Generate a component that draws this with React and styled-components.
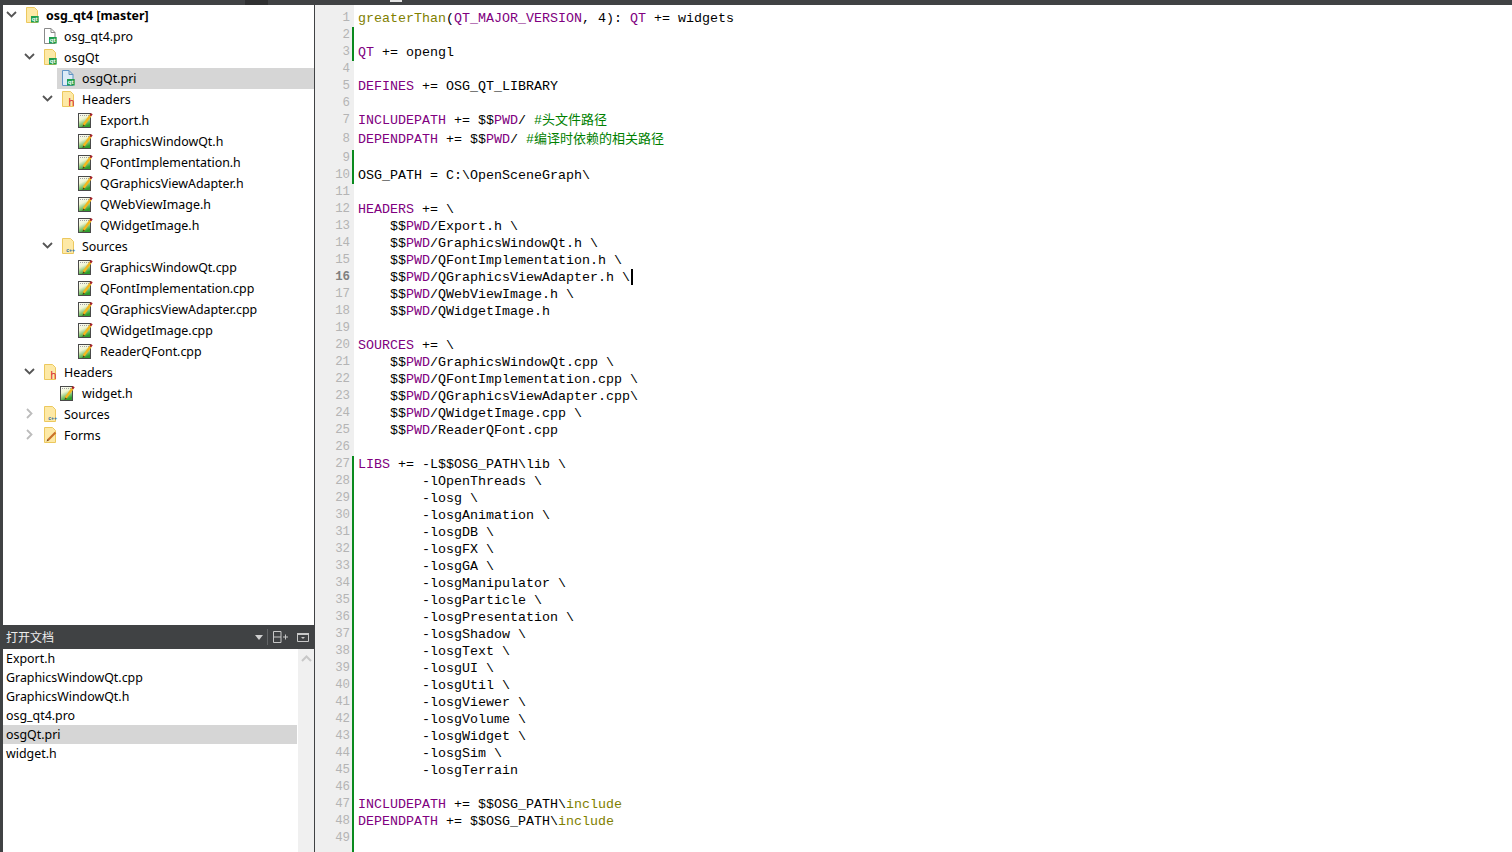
import React from 'react';
import styled, { createGlobalStyle } from 'styled-components';

const GlobalStyle = createGlobalStyle`
  html, body {
    margin: 0;
    height: 100%;
    overflow: hidden;
    background: #fff;
  }
`;

const Page = styled.div`
  display: flex;
  flex-direction: column;
  height: 852px;
  font-family: 'Noto Sans', 'Noto Sans CJK SC', sans-serif;
  font-size: 12.4px;
  color: #000;
`;

const TopBar = styled.div`
  display: flex;
  flex: 0 0 5px;
  background: #404244;
`;

const TopBarTab = styled.div`
  width: 23px;
  margin-left: 245px;
  background: #2f3031;
`;

const TopBarMark = styled.div`
  width: 12px;
  height: 2px;
  margin-left: 122px;
  background: #e4e4e4;
`;

const Main = styled.div`
  display: flex;
  flex: 1;
  min-height: 0;
`;

const Sidebar = styled.div`
  display: flex;
  flex-direction: column;
  flex: 0 0 315px;
  box-sizing: border-box;
  border-left: 3px solid #404244;
  border-right: 1px solid #404244;
`;

const Tree = styled.div`
  flex: 1;
  min-height: 0;
`;

const TreeRow = styled.div`
  display: flex;
  align-items: center;
  height: 21px;
  padding-left: ${(p) => p.$depth * 18}px;
`;

const Toggle = styled.div`
  display: flex;
  align-items: center;
  justify-content: center;
  flex: 0 0 18px;
  height: 100%;
  padding: 0 1px 2px 0;
  box-sizing: border-box;
`;

const TreeItem = styled.div`
  display: flex;
  flex: 1;
  align-items: center;
  gap: 6px;
  height: 100%;
  padding-left: 3px;
  background: ${(p) => (p.$selected ? '#d6d6d6' : 'transparent')};
`;

const TreeLabel = styled.span`
  font-weight: ${(p) => (p.$bold ? 700 : 400)};
  white-space: pre;
  margin-top: -1px;
`;

const PanelHeader = styled.div`
  display: flex;
  align-items: center;
  flex: 0 0 24px;
  padding-left: 3px;
  background: #404244;
  color: #ececec;
  font-family: 'Noto Sans CJK SC', sans-serif;
  font-size: 12px;
`;

const PanelTitle = styled.span`
  flex: 1;
  margin-top: -2px;
`;

const HeaderDivider = styled.div`
  width: 1px;
  height: 16px;
  margin: 0 5px 0 4px;
  background: #626466;
`;

const HeaderIcon = styled.svg`
  display: block;
  flex: none;
  margin-right: ${(p) => p.$gap || 0}px;
`;

const OpenDocs = styled.div`
  display: flex;
  flex: 0 0 203px;
`;

const DocList = styled.div`
  flex: 1;
  padding-right: 1px;
`;

const DocRow = styled.div`
  display: flex;
  align-items: center;
  height: 19px;
  padding: 0 0 1px 3px;
  box-sizing: border-box;
  background: ${(p) => (p.$selected ? '#d6d6d6' : 'transparent')};
`;

const Scrollbar = styled.div`
  display: flex;
  justify-content: center;
  flex: 0 0 16px;
  padding-top: 6px;
  box-sizing: border-box;
  background: #f0f0f0;
`;

const Editor = styled.div`
  flex: 1;
  display: flex;
  flex-direction: column;
  min-width: 0;
  font-family: 'Liberation Mono', monospace;
  font-size: 13.33px;
  line-height: 17px;
  background: linear-gradient(to right, #efefef 39px, #fff 39px);
`;

const GutterSpacer = styled.div`
  flex: 0 0 5px;
`;

const Line = styled.div`
  display: flex;
  align-items: flex-start;
  flex: 0 0 ${(p) => (p.$tall ? 19 : 17)}px;
  min-height: 0;
`;

const LineNumber = styled.div`
  flex: 0 0 35px;
  text-align: right;
  font-size: 12.4px;
  font-weight: ${(p) => (p.$current ? 700 : 400)};
  color: ${(p) => (p.$current ? '#808080' : '#b4b4b4')};
`;

const ChangeMark = styled.div`
  flex: 0 0 2px;
  align-self: stretch;
  margin: 0 4px 0 2px;
  background: ${(p) => (p.$on ? '#0a8a1e' : 'transparent')};
`;

const Code = styled.div`
  white-space: pre;
`;

const COLORS = { kw: '#800080', fn: '#808000', cm: '#008000', plain: '#000' };

const Token = styled.span`
  color: ${(p) => COLORS[p.$kind]};
`;

const Cjk = styled.span`
  color: #008000;
  font-family: 'Noto Sans CJK SC', sans-serif;
  font-size: 13px;
  line-height: 0;
`;

const Caret = styled.span`
  display: inline-block;
  width: 0;
  height: 16px;
  margin-left: 1px;
  vertical-align: top;
  border-left: 2px solid #000;
`;

const EditorFill = styled.div`
  flex: 1;
  display: flex;
`;

const FillMark = styled.div`
  width: 2px;
  margin-left: 37px;
  background: #0a8a1e;
`;

const tree = [
  { depth: 0, label: 'osg_qt4 [master]', icon: 'qtFolder', toggle: 'down', bold: true },
  { depth: 1, label: 'osg_qt4.pro', icon: 'proFile' },
  { depth: 1, label: 'osgQt', icon: 'qtFolder', toggle: 'down' },
  { depth: 2, label: 'osgQt.pri', icon: 'priFile', selected: true },
  { depth: 2, label: 'Headers', icon: 'hFolder', toggle: 'down' },
  { depth: 3, label: 'Export.h', icon: 'note' },
  { depth: 3, label: 'GraphicsWindowQt.h', icon: 'note' },
  { depth: 3, label: 'QFontImplementation.h', icon: 'note' },
  { depth: 3, label: 'QGraphicsViewAdapter.h', icon: 'note' },
  { depth: 3, label: 'QWebViewImage.h', icon: 'note' },
  { depth: 3, label: 'QWidgetImage.h', icon: 'note' },
  { depth: 2, label: 'Sources', icon: 'cppFolder', toggle: 'down' },
  { depth: 3, label: 'GraphicsWindowQt.cpp', icon: 'note' },
  { depth: 3, label: 'QFontImplementation.cpp', icon: 'note' },
  { depth: 3, label: 'QGraphicsViewAdapter.cpp', icon: 'note' },
  { depth: 3, label: 'QWidgetImage.cpp', icon: 'note' },
  { depth: 3, label: 'ReaderQFont.cpp', icon: 'note' },
  { depth: 1, label: 'Headers', icon: 'hFolder', toggle: 'down' },
  { depth: 2, label: 'widget.h', icon: 'note' },
  { depth: 1, label: 'Sources', icon: 'cppFolder', toggle: 'right' },
  { depth: 1, label: 'Forms', icon: 'formFolder', toggle: 'right' },
];

const docs = [
  'Export.h',
  'GraphicsWindowQt.cpp',
  'GraphicsWindowQt.h',
  'osg_qt4.pro',
  'osgQt.pri',
  'widget.h',
];

const source = `greaterThan(QT_MAJOR_VERSION, 4): QT += widgets

QT += opengl

DEFINES += OSG_QT_LIBRARY

INCLUDEPATH += $$PWD/ #头文件路径
DEPENDPATH += $$PWD/ #编译时依赖的相关路径

OSG_PATH = C:\\OpenSceneGraph\\

HEADERS += \\
    $$PWD/Export.h \\
    $$PWD/GraphicsWindowQt.h \\
    $$PWD/QFontImplementation.h \\
    $$PWD/QGraphicsViewAdapter.h \\
    $$PWD/QWebViewImage.h \\
    $$PWD/QWidgetImage.h

SOURCES += \\
    $$PWD/GraphicsWindowQt.cpp \\
    $$PWD/QFontImplementation.cpp \\
    $$PWD/QGraphicsViewAdapter.cpp\\
    $$PWD/QWidgetImage.cpp \\
    $$PWD/ReaderQFont.cpp

LIBS += -L$$OSG_PATH\\lib \\
        -lOpenThreads \\
        -losg \\
        -losgAnimation \\
        -losgDB \\
        -losgFX \\
        -losgGA \\
        -losgManipulator \\
        -losgParticle \\
        -losgPresentation \\
        -losgShadow \\
        -losgText \\
        -losgUI \\
        -losgUtil \\
        -losgViewer \\
        -losgVolume \\
        -losgWidget \\
        -losgSim \\
        -losgTerrain

INCLUDEPATH += $$OSG_PATH\\include
DEPENDPATH += $$OSG_PATH\\include
`.split('\n');

const isChanged = (n) => n === 2 || n === 3 || n === 9 || n === 10 || n >= 27;

const KEYWORDS = /(\b(?:QT_MAJOR_VERSION|QT|DEFINES|INCLUDEPATH|DEPENDPATH|HEADERS|SOURCES|LIBS|PWD)\b|\b(?:greaterThan|include)\b)/;

const renderCode = (text) => {
  const hash = text.indexOf('#');
  const body = hash >= 0 ? text.slice(0, hash) : text;
  const parts = body.split(KEYWORDS).map((part, i) => {
    if (i % 2 === 0) return <Token key={i} $kind="plain">{part}</Token>;
    const isFn = part === 'greaterThan' || part === 'include';
    return <Token key={i} $kind={isFn ? 'fn' : 'kw'}>{part}</Token>;
  });
  if (hash >= 0) {
    parts.push(<Token key="hash" $kind="cm">#</Token>);
    parts.push(<Cjk key="cjk">{text.slice(hash + 1)}</Cjk>);
  }
  return parts;
};

const Chevron = ({ dir }) =>
  dir === 'down' ? (
    <svg width="11" height="7" viewBox="0 0 11 7">
      <path d="M1 1l4.5 4.5L10 1" fill="none" stroke="#555" strokeWidth="1.8" />
    </svg>
  ) : (
    <svg width="7" height="11" viewBox="0 0 7 11">
      <path d="M1 1l4.5 4.5L1 10" fill="none" stroke="#bcbcbc" strokeWidth="1.8" />
    </svg>
  );

const BADGE_FONT = "'Liberation Sans', sans-serif";

const QtBadge = () => (
  <>
    <rect x="7" y="9" width="7.700" height="6.500" fill="#1f9f4c" />
    <text x="7.800" y="14.200" fontFamily={BADGE_FONT} fontSize="6" fontWeight="700" fill="#fff">qt</text>
  </>
);

const FolderShape = () => (
  <path d="M2.500.5h8l3 3v12h-11z" fill="#fde9a6" stroke="#ecc85e" />
);

const DocShape = ({ stroke, fill }) => (
  <path d="M2.500.5h6.500l4 4v11h-10.500z M9 .5v4h4" fill={fill} stroke={stroke} />
);

const TreeIcon = ({ kind }) => (
  <svg width="16" height="16" viewBox="0 0 16 16" style={{ flex: 'none', marginTop: -1 }}>
    {kind === 'qtFolder' && (<><FolderShape /><QtBadge /></>)}
    {kind === 'proFile' && (<><DocShape stroke="#8a8a8a" fill="#fff" /><QtBadge /></>)}
    {kind === 'priFile' && (<><DocShape stroke="#5f93c4" fill="#dcebf7" /><QtBadge /></>)}
    {kind === 'hFolder' && (
      <>
        <FolderShape />
        <text x="8.500" y="15" fontFamily={BADGE_FONT} fontSize="10.500" fill="#d4202c">h</text>
      </>
    )}
    {kind === 'cppFolder' && (
      <>
        <FolderShape />
        <text x="6.200" y="14" fontFamily={BADGE_FONT} fontSize="5.200" fontWeight="700" fill="#2b6ca3">c++</text>
      </>
    )}
    {kind === 'formFolder' && (
      <>
        <FolderShape />
        <path d="M6 13l7.500-7.500" stroke="#c8702a" strokeWidth="2.200" />
        <path d="M4.500 14.500l1-2.400 1.400 1.400z" fill="#7a4a20" />
      </>
    )}
    {kind === 'note' && (
      <>
        <defs>
          <linearGradient id="noteFill" x1="0" y1="0" x2="0.400" y2="1">
            <stop offset="0" stopColor="#ffffff" />
            <stop offset="0.450" stopColor="#eef4d0" />
            <stop offset="1" stopColor="#2f9e2c" />
          </linearGradient>
        </defs>
        <rect x="0.500" y="1.500" width="12" height="14" fill="url(#noteFill)" stroke="#4a4a4a" />
        <path d="M2 3.500h9" stroke="#a0a0a0" strokeDasharray="1 1" />
        <path d="M5.500 13l7-9.500" stroke="#f4b81e" strokeWidth="2.400" />
        <path d="M4.500 15l.8-2.600 1.700 1.200z" fill="#5a4010" />
        <path d="M12.400 3.600l1.400-2" stroke="#a8232a" strokeWidth="2.200" />
      </>
    )}
  </svg>
);

const App = () => (
  <Page>
    <GlobalStyle />
    <TopBar>
      <TopBarTab />
      <TopBarMark />
    </TopBar>
    <Main>
      <Sidebar>
        <Tree>
          {tree.map((item, i) => (
            <TreeRow key={i} $depth={item.depth}>
              <Toggle>{item.toggle && <Chevron dir={item.toggle} />}</Toggle>
              <TreeItem $selected={item.selected}>
                <TreeIcon kind={item.icon} />
                <TreeLabel $bold={item.bold}>{item.label}</TreeLabel>
              </TreeItem>
            </TreeRow>
          ))}
        </Tree>
        <PanelHeader>
          <PanelTitle>打开文档</PanelTitle>
          <HeaderIcon width="8" height="5" viewBox="0 0 8 5">
            <path d="M0 0h8L4 5z" fill="#d0d0d0" />
          </HeaderIcon>
          <HeaderDivider />
          <HeaderIcon width="15" height="12" viewBox="0 0 15 12" $gap={9}>
            <path d="M.5.5h7.500v11H.5zM.5 6h7.500M10 6h5M12.500 3.500v5" fill="none" stroke="#c8c8c8" />
          </HeaderIcon>
          <HeaderIcon width="12" height="9" viewBox="0 0 12 9" $gap={5}>
            <path d="M.5 1.500h11v7H.5z" fill="none" stroke="#c8c8c8" />
            <path d="M0 0h12v2H0z" fill="#c8c8c8" />
            <path d="M4 4h4L6 6z" fill="#c8c8c8" />
          </HeaderIcon>
        </PanelHeader>
        <OpenDocs>
          <DocList>
            {docs.map((name) => (
              <DocRow key={name} $selected={name === 'osgQt.pri'}>{name}</DocRow>
            ))}
          </DocList>
          <Scrollbar>
            <svg width="11" height="7" viewBox="0 0 11 7">
              <path d="M1 6l4.500-4.500L10 6" fill="none" stroke="#c8c8c8" strokeWidth="2" />
            </svg>
          </Scrollbar>
        </OpenDocs>
      </Sidebar>
      <Editor>
        <GutterSpacer />
        {source.map((text, i) => {
          const n = i + 1;
          return (
            <Line key={n} $tall={n === 7 || n === 8}>
              <LineNumber $current={n === 16}>{n}</LineNumber>
              <ChangeMark $on={isChanged(n)} />
              <Code>
                {renderCode(text)}
                {n === 16 && <Caret />}
              </Code>
            </Line>
          );
        })}
        <EditorFill>
          <FillMark />
        </EditorFill>
      </Editor>
    </Main>
  </Page>
);

export default App;
